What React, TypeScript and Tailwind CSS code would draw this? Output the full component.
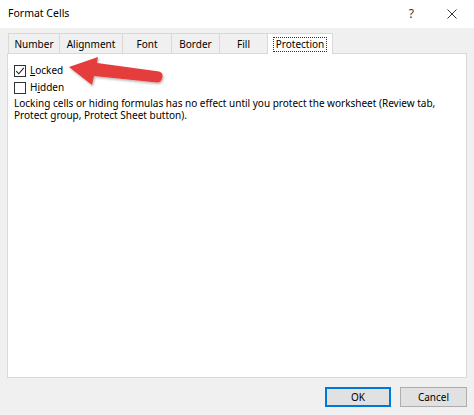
import React from "react";

const tabs = [
  { label: "Number", w: "w-[51px]" },
  { label: "Alignment", w: "w-[63px]" },
  { label: "Font", w: "w-[49px]" },
  { label: "Border", w: "w-[48px]" },
  { label: "Fill", w: "w-[48px]" },
];

function Checkbox({ checked }: { checked?: boolean }) {
  return (
    <span className="flex h-[12px] w-[12px] items-center justify-center border border-[#333] bg-white">
      {checked && (
        <svg width="10" height="10" viewBox="0 0 10 10">
          <path d="M1.2 5.2 L3.8 7.8 L8.8 1.8" fill="none" stroke="#222" strokeWidth="1.1" />
        </svg>
      )}
    </span>
  );
}

function Arrow() {
  return (
    <svg className="absolute left-[64px] top-[54px]" width="104" height="36" viewBox="0 0 104 36">
      <defs>
        <filter id="sh" x="-10%" y="-20%" width="130%" height="160%">
          <feDropShadow dx="1" dy="1.5" stdDeviation="1" floodColor="#000" floodOpacity="0.3" />
        </filter>
      </defs>
      <path
        d="M5 13 L34 3 L33 9 L95 17.5 Q99 18.5 98.5 23 Q97.5 28.5 93 28.5 L30 22 L28 31 Z"
        fill="#e53e3a"
        filter="url(#sh)"
      />
    </svg>
  );
}

export default function App() {
  return (
    <div className="relative h-[415px] w-[474px] overflow-hidden bg-[#f0f0f0] font-['Noto_Sans',sans-serif] text-[10px] text-black">
      <div className="flex h-[28px] items-center bg-white pl-[8px]">
        <span className="text-[10.5px]">Format Cells</span>
        <span className="ml-auto mr-[33px] text-[12px] text-[#333]">?</span>
        <svg className="mr-[17px]" width="10" height="10" viewBox="0 0 10 10">
          <path d="M0.5 0.5 L9.5 9.5 M9.5 0.5 L0.5 9.5" stroke="#333" strokeWidth="1" />
        </svg>
      </div>

      <div className="px-[7px] pt-[5px]">
        <div className="flex h-[20px] items-stretch pl-[1px]">
          {tabs.map((t) => (
            <div
              key={t.label}
              className={`${t.w} flex items-center justify-center border-l border-t border-[#d9d9d9] bg-[#f0f0f0] pt-[2px]`}
            >
              {t.label}
            </div>
          ))}
          <div className="relative z-10 -mb-px flex h-[21px] w-[66px] items-center justify-center border-x border-t border-[#d9d9d9] bg-white pt-[1px]">
            <span className="border border-dotted border-[#333] px-[2px] leading-[13px]">Protection</span>
          </div>
        </div>

        <div className="h-[325px] border border-[#d9d9d9] bg-white pl-[6px] pt-[8px]">
          <div className="flex h-[17px] items-center gap-[4px]">
            <Checkbox checked />
            <span>
              <span className="underline">L</span>ocked
            </span>
          </div>
          <div className="flex h-[17px] items-center gap-[4px]">
            <Checkbox />
            <span>
              H<span className="underline">i</span>dden
            </span>
          </div>
          <p className="mt-[1px] leading-[12px]">
            Locking cells or hiding formulas has no effect until you protect the worksheet (Review tab,
            <br />
            Protect group, Protect Sheet button).
          </p>
        </div>
      </div>

      <div className="flex justify-end gap-[9px] pr-[7px] pt-[9px]">
        <button className="h-[20px] w-[66px] border border-[#0078d7] bg-[#e1e1e1] shadow-[inset_0_0_0_1px_#0078d7]">
          OK
        </button>
        <button className="h-[20px] w-[67px] border border-[#adadad] bg-[#e1e1e1]">Cancel</button>
      </div>

      <Arrow />
    </div>
  );
}
